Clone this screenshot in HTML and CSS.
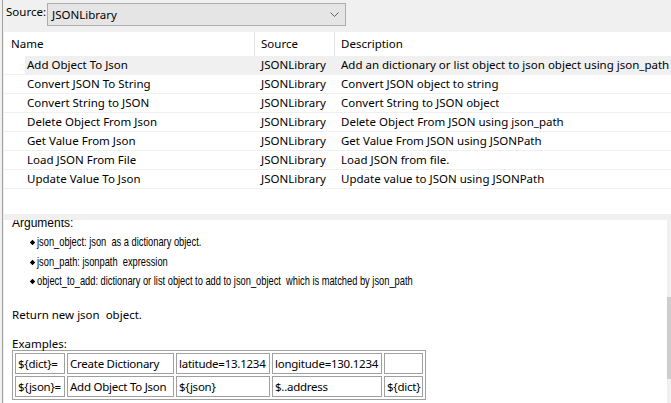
FILE: index.html
```html
<!DOCTYPE html>
<html lang="en">
<head>
    <meta charset="UTF-8">
    <title>Keyword Browser</title>
    <link rel="stylesheet" href="styles.css">
</head>
<body>

<div class="app">
    <div class="toolbar">
        <label class="source-label" for="source">Source:</label>
        <div class="combo" id="source">
            <span>JSONLibrary</span>
            <svg class="chevron" width="9" height="5" viewBox="0 0 9 5"><path d="M0.5 0.5 L4.5 4.5 L8.5 0.5" fill="none" stroke="#606060" stroke-width="1"/></svg>
        </div>
    </div>

    <div class="list">
        <div class="row head">
            <div class="col name">Name</div>
            <div class="col src">Source</div>
            <div class="col desc">Description</div>
        </div>
        <div class="row item selected">
            <div class="col name">Add Object To Json</div>
            <div class="col src">JSONLibrary</div>
            <div class="col desc">Add an dictionary or list object to json object using json_path</div>
        </div>
        <div class="row item">
            <div class="col name">Convert JSON To String</div>
            <div class="col src">JSONLibrary</div>
            <div class="col desc">Convert JSON object to string</div>
        </div>
        <div class="row item">
            <div class="col name">Convert String to JSON</div>
            <div class="col src">JSONLibrary</div>
            <div class="col desc">Convert String to JSON object</div>
        </div>
        <div class="row item">
            <div class="col name">Delete Object From Json</div>
            <div class="col src">JSONLibrary</div>
            <div class="col desc">Delete Object From JSON using json_path</div>
        </div>
        <div class="row item">
            <div class="col name">Get Value From Json</div>
            <div class="col src">JSONLibrary</div>
            <div class="col desc">Get Value From JSON using JSONPath</div>
        </div>
        <div class="row item">
            <div class="col name">Load JSON From File</div>
            <div class="col src">JSONLibrary</div>
            <div class="col desc">Load JSON from file.</div>
        </div>
        <div class="row item">
            <div class="col name">Update Value To Json</div>
            <div class="col src">JSONLibrary</div>
            <div class="col desc">Update value to JSON using JSONPath</div>
        </div>
    </div>

    <div class="doc">
        <div class="doc-body">
            <div class="doc-content">
                <p class="args">Arguments:</p>
                <ul class="arglist">
                    <li><span>json_object: json&nbsp; as a dictionary object.</span></li>
                    <li><span>json_path: jsonpath&nbsp; expression</span></li>
                    <li><span>object_to_add: dictionary or list object to add to json_object&nbsp; which is matched by json_path</span></li>
                </ul>
                <p class="ret">Return new json&nbsp; object.</p>
                <p class="ex">Examples:</p>
                <table class="examples">
                    <tr>
                        <td class="c1">${dict}=</td>
                        <td class="c2">Create Dictionary</td>
                        <td class="c3">latitude=13.1234</td>
                        <td class="c4">longitude=130.1234</td>
                        <td class="c5"></td>
                    </tr>
                    <tr>
                        <td class="c1">${json}=</td>
                        <td class="c2">Add Object To Json</td>
                        <td class="c3">${json}</td>
                        <td class="c4">$..address</td>
                        <td class="c5">${dict}</td>
                    </tr>
                </table>
            </div>
        </div>
        <div class="scrollbar"><div class="thumb"></div></div>
    </div>
</div>

</body>
</html>
```

FILE: styles.css
```css
html, body {
    margin: 0;
    padding: 0;
}
body {
    font-family: "Noto Sans", "Open Sans", sans-serif;
    font-size: 11.5px;
    color: #000;
    background-color: #f0f0f0;
    width: 671px;
    height: 403px;
    overflow: hidden;
}
.app {
    display: flex;
    flex-direction: column;
    height: 403px;
    margin-left: 2px;
    border-left: 1px solid #a0a0a0;
    padding-left: 1px;
}
.toolbar {
    display: flex;
    align-items: center;
    height: 32px;
    flex: none;
}
.source-label {
    margin-left: 2px;
    width: 41px;
    margin-top: -10px;
}
.combo {
    box-sizing: border-box;
    width: 299px;
    height: 23px;
    margin-top: -4px;
    display: flex;
    align-items: center;
    justify-content: space-between;
    padding: 0 6px 0 4px;
    background-color: #e5e5e5;
    border: 1px solid #adadad;
}
.chevron {
    display: block;
}
.list {
    flex: none;
    height: 182px;
    background-color: #fff;
}
.row {
    display: flex;
    height: 19px;
    line-height: 18px;
    border-bottom: 1px solid #f0f0f0;
    box-sizing: border-box;
    white-space: nowrap;
}
.row.head {
    height: 24px;
    line-height: 24px;
    border-bottom: none;
}
.col {
    flex: none;
    box-sizing: border-box;
    overflow: hidden;
}
.name {
    width: 250px;
    padding-left: 23px;
}
.head .name {
    width: 251px;
    padding-left: 7px;
    border-right: 1px solid #e5e5e5;
}
.src {
    width: 80px;
    padding-left: 7px;
}
.head .src {
    padding-left: 6px;
    border-right: 1px solid #e5e5e5;
}
.desc {
    padding-left: 7px;
}
.head .desc {
    padding-left: 6px;
}
.row.selected {
    background: linear-gradient(to right, #fff 21px, #f0f0f0 21px);
}
.doc {
    flex: none;
    margin-top: 6px;
    height: 183px;
    display: flex;
}
.doc-body {
    flex: 1;
    background-color: #fff;
    overflow: hidden;
}
.doc-content {
    margin-top: -6px;
    padding-left: 8px;
}
.doc-content p {
    margin: 0;
}
.args {
    height: 18px;
    line-height: 18px;
    font-family: "Liberation Sans", sans-serif;
    font-size: 12px;
}
.arglist {
    margin: 0;
    padding: 0 0 0 25px;
    list-style: none;
    font-family: "Liberation Sans", sans-serif;
    font-size: 13px;
}
.arglist li {
    height: 19.5px;
    line-height: 20px;
    position: relative;
    white-space: nowrap;
}
.arglist li span {
    display: inline-block;
    transform: scaleX(0.715);
    transform-origin: left center;
}
.arglist li::before {
    content: "";
    position: absolute;
    left: -7px;
    top: 8px;
    width: 5px;
    height: 5px;
    background-color: #000;
    transform: rotate(45deg) scale(0.75);
}
.ret {
    margin-top: 15px !important;
    line-height: 18px;
}
.ex {
    margin-top: 12px !important;
    line-height: 16px;
}
.examples {
    border: 1px solid #a0a0a0;
    border-spacing: 2px;
    margin-top: -2px;
    table-layout: fixed;
    width: 413px;
}
.examples td {
    box-sizing: border-box;
    border: 1px solid #a0a0a0;
    padding: 1px 0 1px 2px;
    height: 21px;
    line-height: 17px;
    letter-spacing: -0.25px;
    white-space: nowrap;
    overflow: hidden;
}
.c1 { width: 50px; }
.c2 { width: 107px; }
.c3 { width: 94px; }
.c4 { width: 110px; }
.c5 { width: 39px; }
.scrollbar {
    width: 4px;
    background-color: #f0f0f0;
    position: relative;
}
.thumb {
    position: absolute;
    left: 0;
    right: 0;
    top: 77px;
    height: 82px;
    background-color: #cdcdcd;
}
```
